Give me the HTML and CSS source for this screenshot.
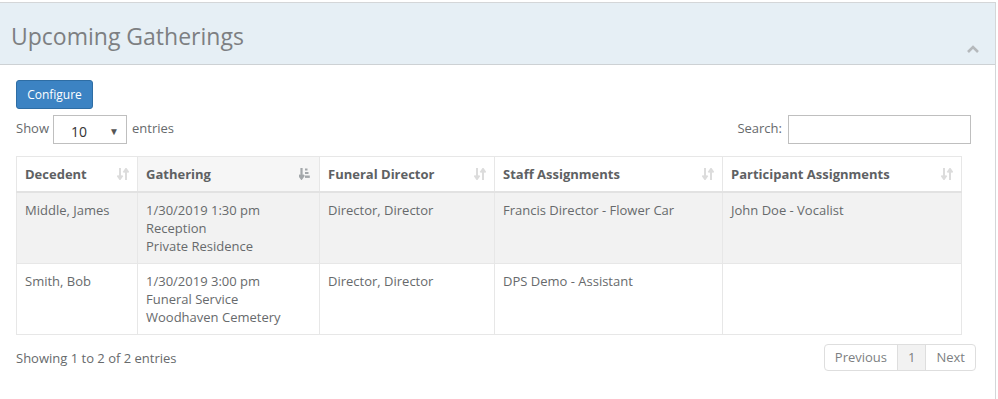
FILE: index.html
```html
<!DOCTYPE html>
<html lang="en">

<head>
    <title>Upcoming Gatherings</title>
    <link rel="stylesheet" href="styles.css">
</head>

<body>
    <div class="panel">
        <div class="panel-heading">
            <h2 class="panel-title">Upcoming Gatherings</h2>
            <span class="collapse-icon">
                <svg width="12" height="8" viewBox="0 0 12 8"><path d="M1 7 L6 2 L11 7" fill="none" stroke="#b5b9bc" stroke-width="2.6"/></svg>
            </span>
        </div>
        <div class="panel-body">
            <button type="button" class="btn-configure">Configure</button>

            <div class="table-controls">
                <label class="length">Show
                    <span class="select-box">10 <span class="caret">&#9660;</span></span>
                    entries</label>
                <label class="search">Search: <input type="text" class="search-input"></label>
            </div>

            <table class="grid">
                <thead>
                    <tr>
                        <th class="col-decedent">Decedent<span class="sort"><svg width="12" height="12" viewBox="0 0 12 12"><path d="M3 0 V10 M0.5 7.5 L3 11 L5.5 7.5 M9 12 V2 M6.5 4.5 L9 1 L11.5 4.5" fill="none" stroke="#dcdcdc" stroke-width="2"/></svg></span></th>
                        <th class="col-gathering sorted">Gathering<span class="sort-asc">
                            <svg width="11" height="12" viewBox="0 0 11 12"><path d="M2.5 0 V9 M0 7 L2.5 10.5 L5 7" fill="none" stroke="#a3a7aa" stroke-width="2.2"/><rect x="6" y="0.5" width="2.5" height="2" fill="#a3a7aa"/><rect x="6" y="4" width="3.5" height="2" fill="#a3a7aa"/><rect x="6" y="7.5" width="4.8" height="2.4" fill="#a3a7aa"/></svg>
                        </span></th>
                        <th class="col-director">Funeral Director<span class="sort"><svg width="12" height="12" viewBox="0 0 12 12"><path d="M3 0 V10 M0.5 7.5 L3 11 L5.5 7.5 M9 12 V2 M6.5 4.5 L9 1 L11.5 4.5" fill="none" stroke="#dcdcdc" stroke-width="2"/></svg></span></th>
                        <th class="col-staff">Staff Assignments<span class="sort"><svg width="12" height="12" viewBox="0 0 12 12"><path d="M3 0 V10 M0.5 7.5 L3 11 L5.5 7.5 M9 12 V2 M6.5 4.5 L9 1 L11.5 4.5" fill="none" stroke="#dcdcdc" stroke-width="2"/></svg></span></th>
                        <th class="col-participant">Participant Assignments<span class="sort"><svg width="12" height="12" viewBox="0 0 12 12"><path d="M3 0 V10 M0.5 7.5 L3 11 L5.5 7.5 M9 12 V2 M6.5 4.5 L9 1 L11.5 4.5" fill="none" stroke="#dcdcdc" stroke-width="2"/></svg></span></th>
                    </tr>
                </thead>
                <tbody>
                    <tr class="odd">
                        <td>Middle, James</td>
                        <td>1/30/2019 1:30 pm<br>Reception<br>Private Residence</td>
                        <td>Director, Director</td>
                        <td>Francis Director - Flower Car</td>
                        <td>John Doe - Vocalist</td>
                    </tr>
                    <tr>
                        <td>Smith, Bob</td>
                        <td>1/30/2019 3:00 pm<br>Funeral Service<br>Woodhaven Cemetery</td>
                        <td>Director, Director</td>
                        <td>DPS Demo - Assistant</td>
                        <td></td>
                    </tr>
                </tbody>
            </table>

            <div class="table-footer">
                <div class="info">Showing 1 to 2 of 2 entries</div>
                <ul class="pagination">
                    <li>Previous</li>
                    <li class="active">1</li>
                    <li>Next</li>
                </ul>
            </div>
        </div>
    </div>
</body>

</html>
```

FILE: styles.css
```css
body {
    margin: 0;
    padding-top: 2px;
    font-family: 'Open Sans', 'Liberation Sans', sans-serif;
    font-size: 13px;
    color: #676a6c;
    background-color: #fff;
}

.panel {
    width: 996px;
    height: 397px;
    border-top: 1px solid #d4d6d8;
    border-right: 1px solid #d4d6d8;
    box-sizing: border-box;
}

.panel-heading {
    display: flex;
    justify-content: space-between;
    align-items: flex-end;
    height: 61px;
    padding: 0 16px 0 11px;
    background-color: #e6eff5;
    border-bottom: 1px solid #cdd1d4;
}

.panel-title {
    margin: 0 0 12px 0;
    font-size: 23px;
    font-weight: 400;
    color: #7d7f82;
    line-height: 32px;
}

.collapse-icon {
    margin-bottom: 11px;
    line-height: 0;
}

.panel-body {
    padding: 15px 20px 0 16px;
}

.btn-configure {
    display: block;
    width: 77px;
    height: 29px;
    padding: 0;
    font-family: 'Open Sans', 'Liberation Sans', sans-serif;
    font-size: 12px;
    color: #fff;
    background-color: #3c83c3;
    border: 1px solid #2e6da4;
    border-radius: 3px;
}

.table-controls {
    display: flex;
    justify-content: space-between;
    align-items: center;
    margin-top: 4px;
    width: 955px;
}

.length,
.search {
    display: flex;
    align-items: center;
    color: #676a6c;
}

.select-box {
    display: flex;
    justify-content: space-between;
    align-items: center;
    width: 74px;
    height: 29px;
    margin: 2px 5px -2px 4px;
    padding: 3px 7px 0 17px;
    box-sizing: border-box;
    border: 1px solid #bfbfbf;
    font-size: 14px;
    color: #333;
}

.caret {
    font-size: 10px;
    color: #555;
}

.search-input {
    width: 183px;
    height: 29px;
    margin: 2px 0 -2px 6px;
    box-sizing: border-box;
    border: 1px solid #bfbfbf;
    outline: none;
}

.grid {
    margin-top: 14px;
    border-collapse: collapse;
    table-layout: fixed;
    width: 946px;
    border-left: 1px solid #e7e7e7;
    border-right: 1px solid #e7e7e7;
}

.grid th,
.grid td {
    padding: 8px;
    line-height: 18px;
    text-align: left;
    vertical-align: top;
    border: 1px solid #e7e7e7;
}

.grid th {
    position: relative;
    font-weight: 700;
    color: #5e6163;
    border-bottom: 2px solid #e2e2e2;
}

.grid th.sorted {
    background-color: #f6f6f6;
}

.col-decedent { width: 104px; }
.col-gathering { width: 165px; }
.col-director { width: 158px; }
.col-staff { width: 211px; }
.col-participant { width: 222px; }

.sort {
    position: absolute;
    right: 8px;
    top: 11px;
    line-height: 0;
}

.sort-asc {
    position: absolute;
    right: 9px;
    top: 11px;
    line-height: 0;
}

.grid tbody td {
    height: 54px;
}

.grid tr.odd td {
    background-color: #f2f2f2;
}

.table-footer {
    display: flex;
    justify-content: space-between;
    align-items: center;
    margin-top: 9px;
    width: 960px;
}

.info {
    padding-top: 1px;
}

.pagination {
    display: flex;
    list-style-type: none;
    margin: 0;
    padding: 0;
    border: 1px solid #dedede;
    border-radius: 4px;
}

.pagination li {
    padding: 0 10px;
    line-height: 25px;
    color: #7d7f82;
}

.pagination li + li {
    border-left: 1px solid #dedede;
}

.pagination li.active {
    background-color: #f2f2f2;
}
```
